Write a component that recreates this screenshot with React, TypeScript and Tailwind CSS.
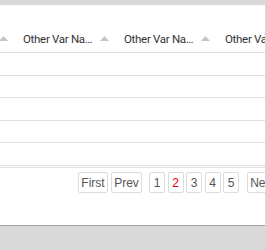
const columns = ['Var Name 0', 'Other Var Name 1', 'Other Var Name 2', 'Other Var Name 3'];

const rowHeights = ['h-[23px]', 'h-[22px]', 'h-[23px]', 'h-[22px]', 'h-[23px]'];

function SortArrow() {
  return (
    <svg width="9" height="5" viewBox="0 0 9 5" className="shrink-0">
      <path d="M0 5 L4.5 0 L9 5 Z" fill="#c4c4c4" />
    </svg>
  );
}

function PageButton({ label, active, width }: { label: string; active?: boolean; width: string }) {
  return (
    <button
      className={`${width} h-[21px] shrink-0 flex items-center justify-center rounded-[2px] border border-[#dcdcdc] bg-white text-[12px] ${
        active ? 'text-[#e8000b]' : 'text-[#555]'
      }`}
    >
      {label}
    </button>
  );
}

export default function App() {
  return (
    <div className="w-[266px] h-[250px] bg-[#d9d9d9] overflow-hidden pt-[5px]">
      <div className="w-[265px] h-[221px] bg-white border-b border-[#a6a6a6] overflow-hidden">
        <div className="overflow-hidden" style={{ fontFamily: 'Roboto, "Noto Sans", sans-serif' }}>
          <div className="ml-[-88px] w-max">
            <div className="flex h-[48px] border-b border-[#e0e0e0]">
              {columns.map((col) => (
                <div key={col} className="w-[101px] shrink-0 flex items-center pt-[20px] pl-[10px] pr-[5px]">
                  <span className="w-[71px] truncate text-[11.5px] tracking-[-0.3px] font-normal text-[#333] leading-[14px]">
                    {col}
                  </span>
                  <div className="flex-1" />
                  <SortArrow />
                </div>
              ))}
            </div>
            {rowHeights.map((h, i) => (
              <div key={i} className={`${h} border-b border-[#e0e0e0]`} />
            ))}
          </div>
        </div>
        <div
          className="mt-[1px] border-t border-[#e0e0e0] pt-[4px] pl-[78px] flex items-center"
          style={{ fontFamily: '"Liberation Sans", Arial, sans-serif' }}
        >
          <div className="flex gap-[3px]">
            <PageButton label="First" width="w-[30px]" />
            <PageButton label="Prev" width="w-[31px]" />
          </div>
          <div className="flex gap-[2.5px] ml-[7px]">
            {['1', '2', '3', '4', '5'].map((n) => (
              <PageButton key={n} label={n} active={n === '2'} width="w-[16px]" />
            ))}
          </div>
          <div className="ml-[8px]">
            <PageButton label="Next" width="w-[31px]" />
          </div>
        </div>
      </div>
    </div>
  );
}
